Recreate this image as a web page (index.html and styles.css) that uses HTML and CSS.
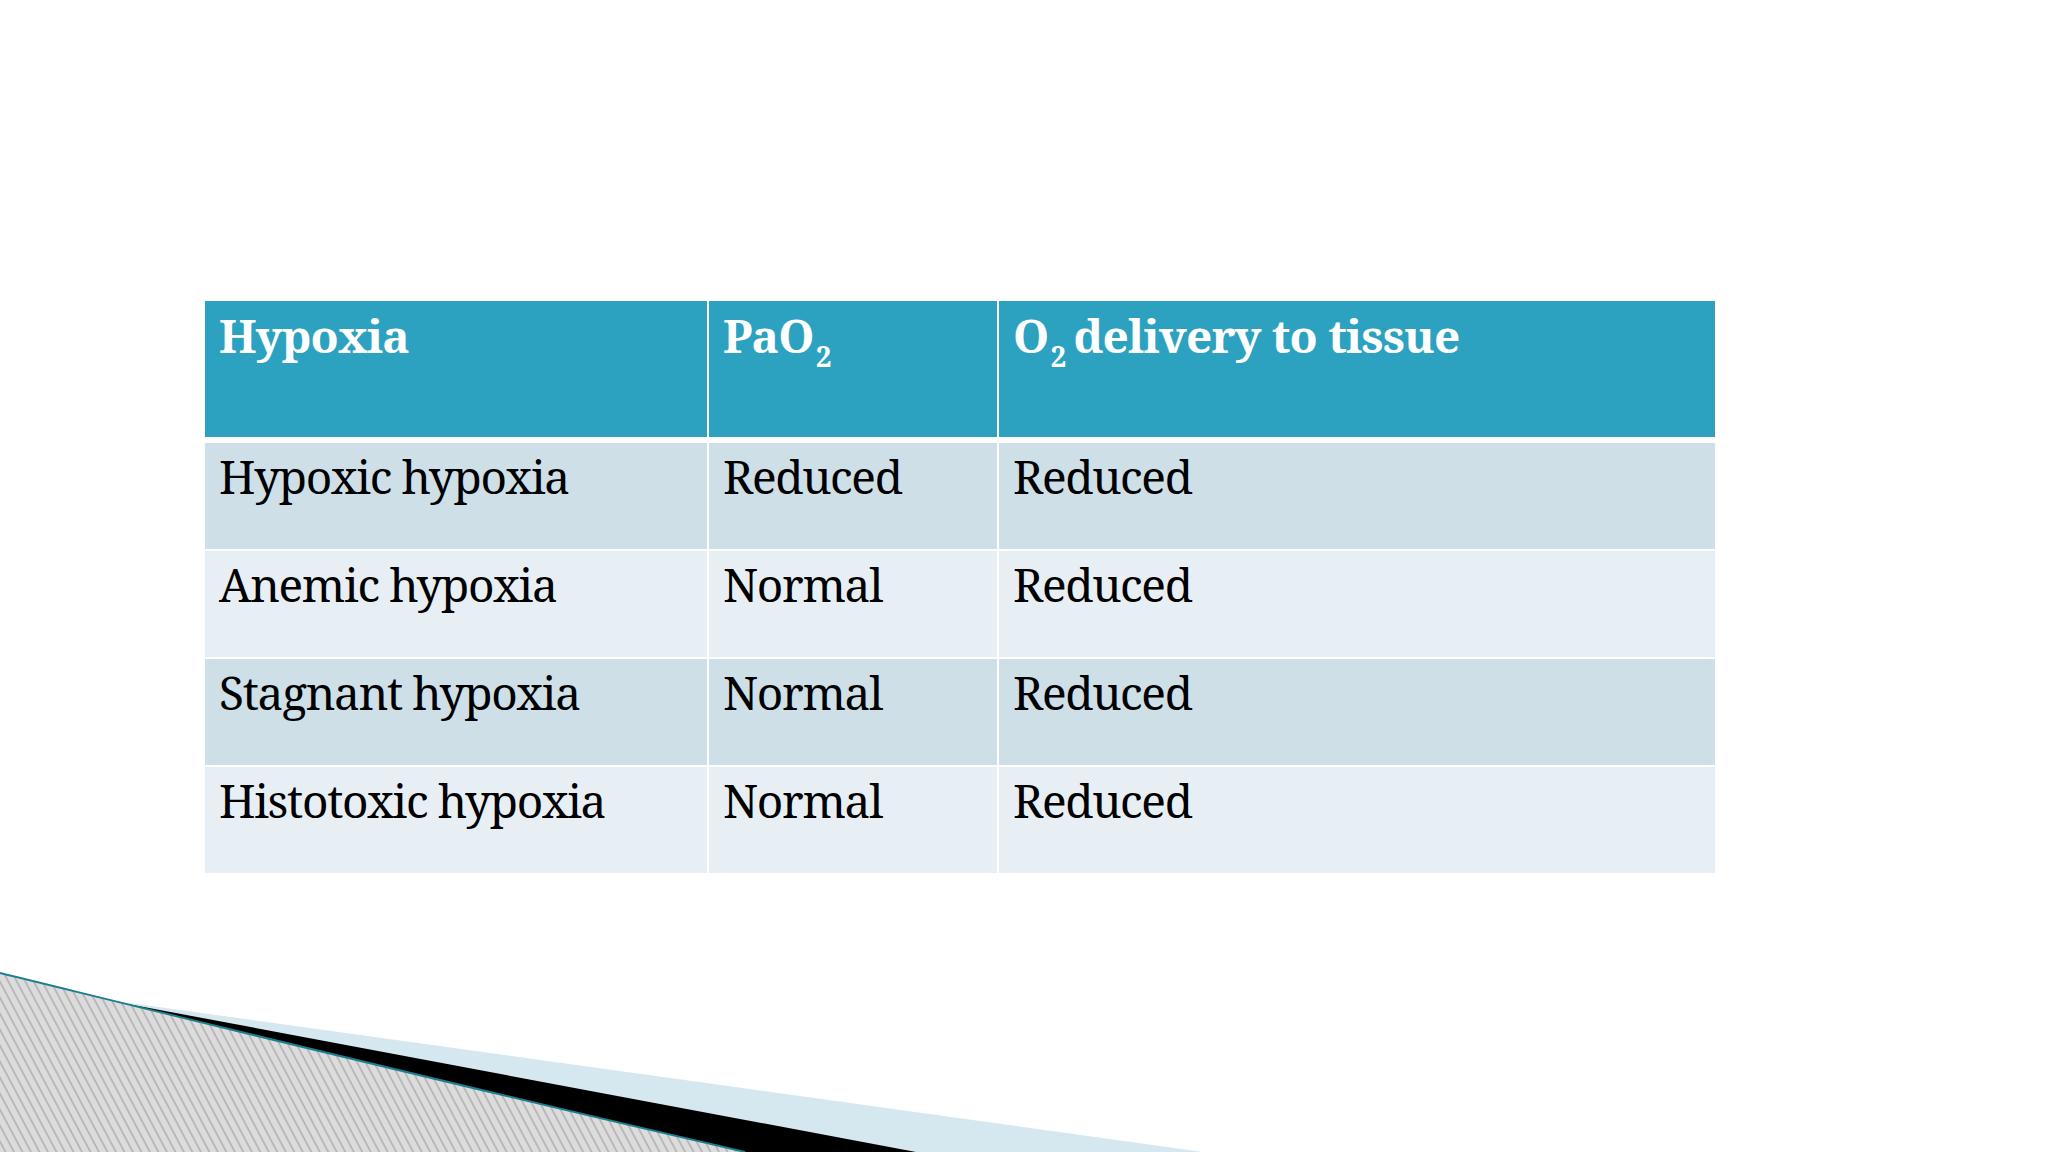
FILE: index.html
```html
<!DOCTYPE html>
<html lang="en">
<head>
<meta charset="utf-8">
<title>Hypoxia types</title>
<link rel="stylesheet" href="styles.css">
</head>
<body>
<div class="slide">
  <div class="table">
    <div class="head">
      <div class="cell hcell">Hypoxia</div>
      <div class="cell hcell">PaO<sub class="sub">2</sub></div>
      <div class="cell hcell">O<sub class="sub">2 </sub>delivery to tissue</div>
    </div>
    <div class="body">
      <div class="cell odd">Hypoxic hypoxia</div>
      <div class="cell odd">Reduced</div>
      <div class="cell odd">Reduced</div>
      <div class="cell even">Anemic hypoxia</div>
      <div class="cell even">Normal</div>
      <div class="cell even">Reduced</div>
      <div class="cell odd">Stagnant hypoxia</div>
      <div class="cell odd">Normal</div>
      <div class="cell odd">Reduced</div>
      <div class="cell even">Histotoxic hypoxia</div>
      <div class="cell even">Normal</div>
      <div class="cell even">Reduced</div>
    </div>
  </div>
  <svg class="deco" width="1300" height="200" viewBox="0 0 1300 200" aria-hidden="true">
    <defs>
      <pattern id="hatch" width="7.5" height="20" patternUnits="userSpaceOnUse" patternTransform="rotate(-28)">
        <rect width="7.5" height="20" fill="#dcdcdc"/>
        <line x1="1" y1="0" x2="1" y2="20" stroke="#a8a8a8" stroke-width="1.3"/>
      </pattern>
    </defs>
    <polygon points="0,33 1203,200 0,200" fill="#d6e8ef"/>
    <polygon points="0,28 916,200 0,200" fill="#000"/>
    <path d="M0 21 C 200 70, 450 132, 745 200 L 0 200 Z" fill="url(#hatch)"/>
    <path d="M0 21 C 200 70, 450 132, 745 200" fill="none" stroke="#1b7f8e" stroke-width="2"/>
  </svg>
</div>
</body>
</html>
```
FILE: styles.css
```css
html, body {
  margin: 0;
  padding: 0;
  background: #fff;
}

.slide {
  position: relative;
  width: 2048px;
  height: 1152px;
  overflow: hidden;
  box-sizing: border-box;
  padding: 301px 0 0 205px;
  background: #fff;
  font-family: "Noto Serif", "DejaVu Serif", serif;
}

.table {
  display: flex;
  flex-direction: column;
  gap: 6px;
  width: 1510px;
}

.head,
.body {
  display: grid;
  grid-template-columns: 502px 288px 716px;
  column-gap: 2px;
}

.head {
  grid-template-rows: 136px;
}

.body {
  grid-template-rows: repeat(4, 106px);
  row-gap: 2px;
}

.cell {
  box-sizing: border-box;
  padding: 5px 14px 0 14px;
  font-size: 46px;
  line-height: 56px;
  letter-spacing: -1.3px;
  color: #000;
  white-space: nowrap;
}

.hcell {
  background: #2ca2c0;
  color: #fff;
  font-weight: 700;
  letter-spacing: -0.8px;
  padding-top: 6px;
}

.odd {
  background: #cedfe8;
}

.even {
  background: #e8eff4;
}

.sub {
  font-size: 28px;
  line-height: 0;
  letter-spacing: 0;
  vertical-align: -14px;
  margin-left: 2px;
}

.deco {
  position: absolute;
  left: 0;
  bottom: 0;
  display: block;
}
```
